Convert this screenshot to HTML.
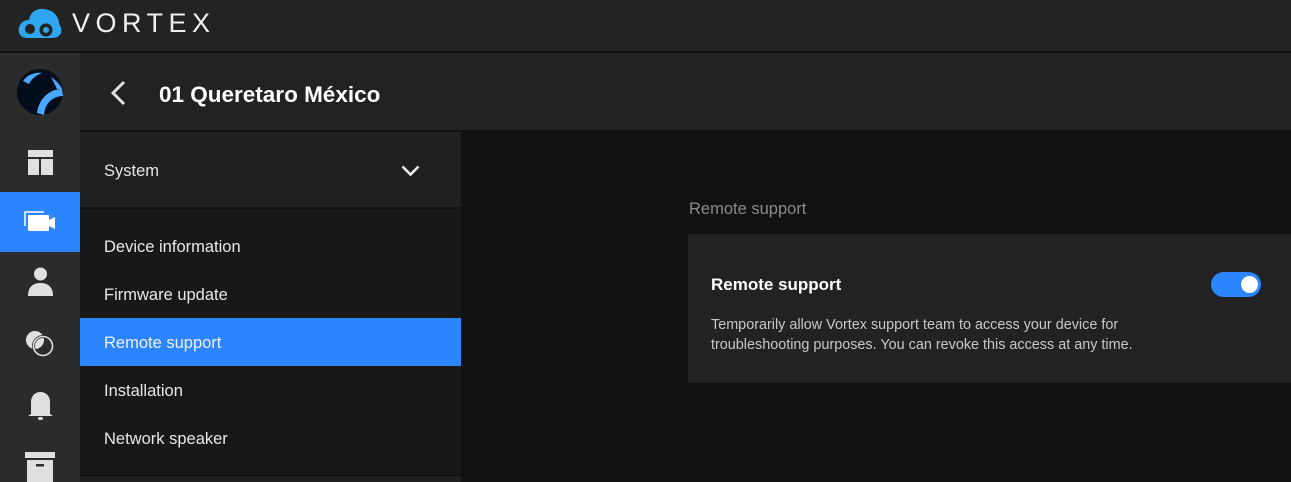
<!DOCTYPE html>
<html><head><style>
*{margin:0;padding:0;box-sizing:border-box}
body{width:1291px;height:482px;overflow:hidden;background:#111;font-family:"Liberation Sans",sans-serif;position:relative;color:#e6e6e6}
.abs{position:absolute}
.top{left:0;top:0;width:1291px;height:52px;background:#232323;border-bottom:1px solid #111}
.rail{left:0;top:53px;width:80px;height:429px;background:#2b2b2b}
.hdr{left:80px;top:53px;width:1211px;height:78px;background:#222;border-bottom:1px solid #151515}
.sys{left:80px;top:132px;width:381px;height:76px;background:#202020;border-bottom:1px solid #111}
.list{left:80px;top:209px;width:381px;height:266px;background:#181818}
.item{position:absolute;left:0;width:381px;height:48px;line-height:50px;padding-left:24px;font-size:16.5px;color:#e8e8e8}
.card{left:688px;top:234px;width:603px;height:149px;background:#222}
</style></head><body>
<div class="abs top">
<svg class="abs" style="left:17px;top:6px" width="46" height="34" viewBox="0 0 46 34"><path d="M10 32 C2 32 0 24 3 19 C5 15 9 14 12 14 C13 6 20 2 27 3 C36 4 42 10 42 18 C44 20 45 24 44 27 C42 31 38 32 35 32 Z" fill="#2ea6f0"/><circle cx="13" cy="23" r="5" fill="#232323"/><circle cx="29" cy="24" r="6.5" fill="#232323"/><circle cx="29" cy="24" r="3" fill="#2ea6f0"/></svg>
<div class="abs" style="left:72px;top:8px;font-size:27px;letter-spacing:5.5px;color:#f0f0f0">VORTEX</div>
</div>
<div class="abs rail">
<svg class="abs" style="left:17px;top:16px" width="46" height="46" viewBox="0 0 46 46"><circle cx="23" cy="23" r="23" fill="#030d1c"/><path d="M6 12 C10 6 18 3 25 4 C20 6 15 9 12 15Z" fill="#4aa8ff"/><path d="M20 44 C22 30 32 20 45 20 L46 27 C36 27 28 34 27 46Z" fill="#4aa8ff"/><path d="M34 8 C40 12 44 17 45 20 L40 20 C38 16 36 12 34 8Z" fill="#4aa8ff"/></svg>
<svg class="abs" style="left:28px;top:97px" width="25" height="25" viewBox="0 0 25 25" fill="#e0e0e0"><rect x="0" y="0" width="25" height="7"/><rect x="0" y="9" width="11" height="16"/><rect x="13" y="9" width="12" height="16"/></svg>
<div class="abs" style="left:0;top:139px;width:80px;height:60px;background:#2a85ff"></div>
<svg class="abs" style="left:24px;top:157px" width="33" height="24" viewBox="0 0 33 24" fill="#fff"><path d="M1 16V2h19" stroke="#fff" stroke-width="1.5" fill="none"/><rect x="4" y="5" width="21" height="16" rx="1"/><path d="M25 10l6-3v12l-6-3z"/></svg>
<svg class="abs" style="left:28px;top:214px" width="25" height="29" viewBox="0 0 25 29" fill="#e0e0e0"><circle cx="12.5" cy="7" r="6.5"/><path d="M0 29C0 20 5 16 12.5 16S25 20 25 29Z"/></svg>
<svg class="abs" style="left:25px;top:277px" width="30" height="28" viewBox="0 0 30 28"><circle cx="10" cy="10" r="9" fill="#e0e0e0"/><circle cx="18" cy="16" r="9.5" fill="none" stroke="#2b2b2b" stroke-width="3"/><circle cx="18" cy="16" r="9.5" fill="none" stroke="#e0e0e0" stroke-width="1.6"/></svg>
<svg class="abs" style="left:28px;top:337px" width="25" height="30" viewBox="0 0 25 30" fill="#e0e0e0"><path d="M3 24V12C3 6 7 2 12.5 2S22 6 22 12V24L25 26H0Z"/><rect x="10" y="27" width="5" height="3" rx="1.5"/></svg>
<svg class="abs" style="left:25px;top:399px" width="30" height="30" viewBox="0 0 30 30" fill="#e0e0e0"><rect x="0" y="0" width="30" height="6"/><rect x="2" y="8" width="26" height="22"/><rect x="11" y="12" width="8" height="2.5" fill="#2b2b2b"/></svg>
</div>
<div class="abs hdr">
<svg class="abs" style="left:30px;top:27px" width="16" height="26" viewBox="0 0 16 26"><path d="M14 2L3 13l11 11" stroke="#e0e0e0" stroke-width="3" fill="none"/></svg>
<div class="abs" style="left:79px;top:29px;font-size:22.5px;font-weight:bold;color:#fff">01 Queretaro México</div>
</div>
<div class="abs sys">
<div class="abs" style="left:24px;top:30px;font-size:16.5px">System</div>
<svg class="abs" style="left:321px;top:33px" width="19" height="12" viewBox="0 0 19 12"><path d="M1.5 1.5l8 8 8-8" stroke="#eee" stroke-width="2.6" fill="none"/></svg>
</div>
<div class="abs list">
<div class="item" style="top:13px">Device information</div>
<div class="item" style="top:61px">Firmware update</div>
<div class="item" style="top:109px;background:#2a85ff;color:#f0f0ff">Remote support</div>
<div class="item" style="top:157px">Installation</div>
<div class="item" style="top:205px">Network speaker</div>
</div>
<div class="abs" style="left:80px;top:475px;width:381px;height:7px;background:#202020;border-top:1px solid #0c0c0c"></div>
<div class="abs" style="left:689px;top:200px;font-size:16.5px;color:#8a8a8a">Remote support</div>
<div class="abs card">
<div class="abs" style="left:23px;top:41px;font-size:17px;font-weight:bold;color:#fff">Remote support</div>
<div class="abs" style="left:523px;top:38px;width:50px;height:25px;border-radius:13px;background:#2a85ff"></div>
<div class="abs" style="left:553px;top:42px;width:17px;height:17px;border-radius:50%;background:#fff"></div>
<div class="abs" style="left:23px;top:81px;font-size:14.4px;line-height:20px;color:#c8c8c8;white-space:nowrap">Temporarily allow Vortex support team to access your device for<br>troubleshooting purposes. You can revoke this access at any time.</div>
</div>
</body></html>
